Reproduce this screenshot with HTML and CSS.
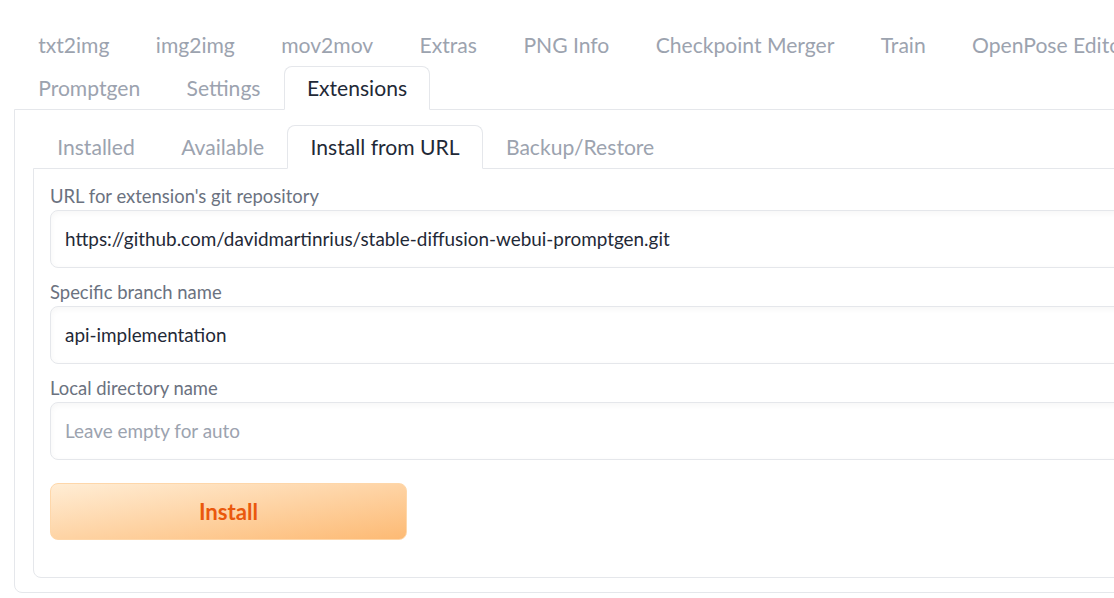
FILE: index.html
```html
<!DOCTYPE html>
<html>
<head>
<meta charset="utf-8">
<link rel="stylesheet" href="styles.css">
</head>
<body>
<div class="app">
  <div class="tabnav">
    <div class="tabrow">
      <div class="tab">txt2img</div>
      <div class="tab">img2img</div>
      <div class="tab">mov2mov</div>
      <div class="tab">Extras</div>
      <div class="tab">PNG Info</div>
      <div class="tab">Checkpoint Merger</div>
      <div class="tab">Train</div>
      <div class="tab">OpenPose Editor</div>
    </div>
    <div class="tabrow">
      <div class="tab">Promptgen</div>
      <div class="tab">Settings</div>
      <div class="tab selected">Extensions</div>
    </div>
  </div>
  <div class="panel outer">
    <div class="tabnav">
      <div class="tabrow">
        <div class="tab">Installed</div>
        <div class="tab">Available</div>
        <div class="tab selected">Install from URL</div>
        <div class="tab">Backup/Restore</div>
      </div>
    </div>
    <div class="panel inner">
      <div class="field">
        <div class="label">URL for extension's git repository</div>
        <div class="input">https://github.com/davidmartinrius/stable-diffusion-webui-promptgen.git</div>
      </div>
      <div class="field">
        <div class="label">Specific branch name</div>
        <div class="input">api-implementation</div>
      </div>
      <div class="field">
        <div class="label">Local directory name</div>
        <div class="input placeholder">Leave empty for auto</div>
      </div>
      <button class="btn">Install</button>
    </div>
  </div>
</div>
</body>
</html>
```
FILE: styles.css
```css
html, body {
  margin: 0;
  padding: 0;
  background: #ffffff;
  overflow: hidden;
}
body {
  font-family: "Lato", "Liberation Sans", sans-serif;
  width: 1114px;
  height: 598px;
}
.app {
  width: 1300px;
  padding: 23px 0 0 14px;
}
.tabnav {
  padding-left: 1px;
}
.tabrow {
  display: flex;
  white-space: nowrap;
}
.tab {
  height: 43px;
  box-sizing: border-box;
  line-height: 41px;
  padding: 0 22.2px;
  border: 1px solid transparent;
  border-radius: 8px 8px 0 0;
  font-size: 21.1px;
  color: #9ca3af;
}
.tab.selected {
  color: #1f2937;
  background: #ffffff;
  border-color: #e5e7eb;
  border-bottom-color: #ffffff;
  margin-bottom: -1px;
  height: 44px;
  position: relative;
  z-index: 1;
}
.panel {
  border: 1px solid #e5e7eb;
  border-radius: 0 0 8px 8px;
  background: #ffffff;
}
.outer {
  padding: 15px 0 14px 18px;
}
.inner {
  padding: 15px 0 37px 16px;
  display: flex;
  flex-direction: column;
  gap: 12px;
}
.field {
  display: flex;
  flex-direction: column;
  gap: 2px;
}
.label {
  font-size: 18.45px;
  line-height: 24px;
  color: #6b7280;
}
.input {
  height: 58px;
  box-sizing: border-box;
  border: 1px solid #e5e7eb;
  border-radius: 8px;
  padding: 0 14px;
  line-height: 56px;
  font-size: 18.9px;
  color: #1f2937;
  box-shadow: inset 0 2px 6px rgba(0, 0, 0, 0.04);
}
.input.placeholder {
  color: #9ca3af;
}
.btn {
  margin-top: 11px;
  width: 357px;
  height: 57px;
  border: 1px solid #fed7aa;
  border-radius: 8px;
  background: linear-gradient(to bottom right, #ffedd5, #fdba74);
  color: #ea580c;
  font-family: "Lato", "Liberation Sans", sans-serif;
  font-weight: 700;
  font-size: 22.2px;
  align-self: flex-start;
}
```
